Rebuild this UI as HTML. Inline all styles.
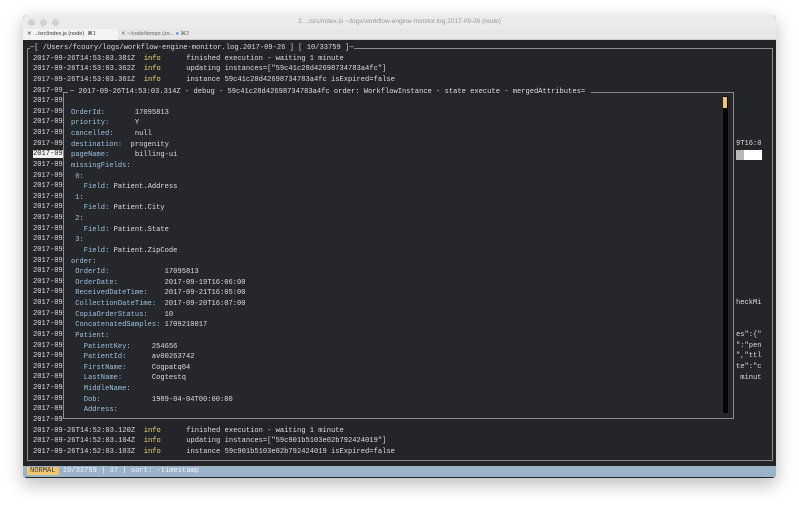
<!DOCTYPE html>
<html><head><style>
*{margin:0;padding:0;box-sizing:border-box}
body{width:799px;height:505px;background:#fff;position:relative;overflow:hidden;font-family:"Liberation Mono",monospace}
#win{position:absolute;left:23px;top:15px;width:753px;height:463px;background:#232529;box-shadow:0 6px 18px rgba(0,0,0,.28);border-radius:4px;overflow:hidden}
#title{position:absolute;left:0;top:0;width:753px;height:14px;background:#ebebeb;font-family:"Liberation Sans",sans-serif;font-size:6.5px;color:#999;text-align:center;line-height:14px}
.dot{position:absolute;top:4px;width:7px;height:7px;border-radius:50%;background:#d0d0d0}
#tabs{position:absolute;left:0;top:14px;width:753px;height:11px;background:#e6e6e6;border-bottom:1px solid #ccc;font-family:"Liberation Sans",sans-serif;font-size:5.5px;color:#333;line-height:11px}
.tab{position:absolute;top:0;height:11px}
pre{position:absolute;font-family:"Liberation Mono",monospace;font-size:7.1px;line-height:10.62px;color:#dcdee0;white-space:pre}
.y{color:#f0dc70}
.k{color:#9cc2e2}
.hl{background:#f2f2f2;color:#222}
#status{position:absolute;left:0;top:451px;width:753px;height:11px;background:#9ab3c9;font-size:7.1px;line-height:11px;color:#f4f7fa;white-space:pre}
</style></head><body>
<div id="win">
<div id="title">2. ../src/index.js ~/logs/workflow-engine-monitor.log.2017-09-26 (node)
<div class="dot" style="left:5px"></div><div class="dot" style="left:17px"></div><div class="dot" style="left:29px"></div></div>
<div id="tabs"><div class="tab" style="left:0;width:95px;background:#f3f3f3;padding-left:4px">✕ &nbsp;../src/index.js (node) &nbsp;⌘1</div><div class="tab" style="left:96px;width:95px;padding-left:2px;color:#666">✕ ~/code/tempo (zs... <span style="color:#3a7bd5">●</span> ⌘2</div></div>
<div style="position:absolute;left:4px;top:33px;width:746px;height:413px;border:1px solid #8a8c8f"></div>
<pre style="left:7px;top:28px;background:#232529">─[ /Users/fcoury/logs/workflow-engine-monitor.log.2017-09-26 ] [ 10/33759 ]─</pre>
<pre style="left:10px;top:38.7px">2017-09-26T14:53:03.381Z  <span class="y">info</span>      finished execution - waiting 1 minute
2017-09-26T14:53:03.362Z  <span class="y">info</span>      updating instances=["59c41c28d42698734783a4fc"]
2017-09-26T14:53:03.361Z  <span class="y">info</span>      instance 59c41c28d42698734783a4fc isExpired=false
2017-09
2017-09
2017-09
2017-09
2017-09
2017-09
<span class="hl">2017-09</span>
2017-09
2017-09
2017-09
2017-09
2017-09
2017-09
2017-09
2017-09
2017-09
2017-09
2017-09
2017-09
2017-09
2017-09
2017-09
2017-09
2017-09
2017-09
2017-09
2017-09
2017-09
2017-09
2017-09
2017-09
2017-09
2017-09-26T14:52:03.120Z  <span class="y">info</span>      finished execution - waiting 1 minute
2017-09-26T14:52:03.104Z  <span class="y">info</span>      updating instances=["59c901b5103e02b792424019"]
2017-09-26T14:52:03.103Z  <span class="y">info</span>      instance 59c901b5103e02b792424019 isExpired=false</pre>
<pre style="left:713px;top:123.7px">9T16:0</pre>
<div style="position:absolute;left:713px;top:135px;width:26px;height:10px;background:#fff"><div style="width:8px;height:10px;background:#b8b8b8"></div></div>
<pre style="left:713px;top:283px">heckMi</pre>
<pre style="left:713px;top:315px">es":{"
":"pen
","ttl
te":"c
 minut</pre>
<div style="position:absolute;left:40px;top:77px;width:671px;height:327px;background:#25272b;border:1px solid #8a8c8f"></div>
<div style="position:absolute;left:700px;top:81px;width:5px;height:317px;background:#050505"></div>
<div style="position:absolute;left:700px;top:82px;width:4px;height:11px;background:#f0c674"></div>
<pre style="left:45px;top:71.5px;background:#232529;padding:0 2px">─ 2017-09-26T14:53:03.314Z - debug - 59c41c28d42698734783a4fc order: WorkflowInstance - state execute - mergedAttributes= </pre>
<pre style="left:48px;top:92.8px"><span class="k">OrderId:</span>       17095813
<span class="k">priority:</span>      Y
<span class="k">cancelled:</span>     null
<span class="k">destination:</span>  progenity
<span class="k">pageName:</span>      billing-ui
<span class="k">missingFields:</span>
 <span class="k">0:</span>
   <span class="k">Field:</span> Patient.Address
 <span class="k">1:</span>
   <span class="k">Field:</span> Patient.City
 <span class="k">2:</span>
   <span class="k">Field:</span> Patient.State
 <span class="k">3:</span>
   <span class="k">Field:</span> Patient.ZipCode
<span class="k">order:</span>
 <span class="k">OrderId:</span>             17095813
 <span class="k">OrderDate:</span>           2017-09-19T16:06:00
 <span class="k">ReceivedDateTime:</span>    2017-09-21T16:05:00
 <span class="k">CollectionDateTime:</span>  2017-09-20T16:07:00
 <span class="k">CopiaOrderStatus:</span>    10
 <span class="k">ConcatenatedSamples:</span> 1709210017
 <span class="k">Patient:</span>
   <span class="k">PatientKey:</span>     254656
   <span class="k">PatientId:</span>      av00263742
   <span class="k">FirstName:</span>      Cogpatq04
   <span class="k">LastName:</span>       Cogtestq
   <span class="k">MiddleName:</span>
   <span class="k">Dob:</span>            1989-04-04T00:00:00
   <span class="k">Address:</span></pre>
<div id="status"><span style="background:#f0c674;color:#3a3a3a;padding:0 3px;margin-left:4px">NORMAL</span> 10/33759 | 37 | sort: -timestamp</div>
</div>
</body></html>
